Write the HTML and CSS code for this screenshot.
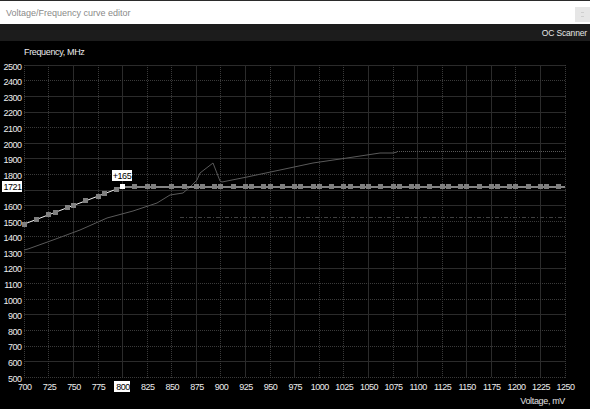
FILE: index.html
```html
<!DOCTYPE html>
<html>
<head>
<meta charset="utf-8">
<title>Voltage/Frequency curve editor</title>
<link rel="stylesheet" href="styles.css">
</head>
<body>
<div class="window">
  <header class="titlebar">
    <span class="title">Voltage/Frequency curve editor</span>
    <span class="close"></span>
  </header>
  <div class="toolbar"><span class="oc">OC Scanner</span></div>
  <main class="chart">
    <svg class="plot" width="590" height="368" viewBox="0 0 590 368">
      <g transform="translate(0,-41)">
        <text class="axis-title" x="24" y="55">Frequency, MHz</text>
        <g class="grid-solid">
          <line x1="73.5" y1="65" x2="73.5" y2="377"/>
          <line x1="122.5" y1="65" x2="122.5" y2="377"/>
          <line x1="196.5" y1="65" x2="196.5" y2="377"/>
          <line x1="245.5" y1="65" x2="245.5" y2="377"/>
          <line x1="294.5" y1="65" x2="294.5" y2="377"/>
          <line x1="368.5" y1="65" x2="368.5" y2="377"/>
          <line x1="417.5" y1="65" x2="417.5" y2="377"/>
          <line x1="466.5" y1="65" x2="466.5" y2="377"/>
          <line x1="491.5" y1="65" x2="491.5" y2="377"/>
          <line x1="540.5" y1="65" x2="540.5" y2="377"/>
          <line x1="24" y1="65.5" x2="566" y2="65.5"/>
          <line x1="24" y1="96.5" x2="566" y2="96.5"/>
          <line x1="24" y1="112.5" x2="566" y2="112.5"/>
          <line x1="24" y1="143.5" x2="566" y2="143.5"/>
          <line x1="24" y1="158.5" x2="566" y2="158.5"/>
          <line x1="24" y1="190.5" x2="566" y2="190.5"/>
          <line x1="24" y1="205.5" x2="566" y2="205.5"/>
          <line x1="24" y1="252.5" x2="566" y2="252.5"/>
          <line x1="24" y1="268.5" x2="566" y2="268.5"/>
          <line x1="24" y1="314.5" x2="566" y2="314.5"/>
          <line x1="24" y1="361.5" x2="566" y2="361.5"/>
        </g>
        <g class="grid-dot">
          <line x1="24.5" y1="65" x2="24.5" y2="378"/>
          <line x1="48.5" y1="65" x2="48.5" y2="378"/>
          <line x1="98.5" y1="65" x2="98.5" y2="378"/>
          <line x1="147.5" y1="65" x2="147.5" y2="378"/>
          <line x1="171.5" y1="65" x2="171.5" y2="378"/>
          <line x1="220.5" y1="65" x2="220.5" y2="378"/>
          <line x1="270.5" y1="65" x2="270.5" y2="378"/>
          <line x1="319.5" y1="65" x2="319.5" y2="378"/>
          <line x1="343.5" y1="65" x2="343.5" y2="378"/>
          <line x1="393.5" y1="65" x2="393.5" y2="378"/>
          <line x1="442.5" y1="65" x2="442.5" y2="378"/>
          <line x1="515.5" y1="65" x2="515.5" y2="378"/>
          <line x1="565.5" y1="65" x2="565.5" y2="378"/>
          <line x1="24" y1="80.5" x2="566" y2="80.5"/>
          <line x1="24" y1="127.5" x2="566" y2="127.5"/>
          <line x1="24" y1="174.5" x2="566" y2="174.5"/>
          <line x1="24" y1="221.5" x2="566" y2="221.5"/>
          <line x1="24" y1="236.5" x2="566" y2="236.5"/>
          <line x1="24" y1="283.5" x2="566" y2="283.5"/>
          <line x1="24" y1="299.5" x2="566" y2="299.5"/>
          <line x1="24" y1="330.5" x2="566" y2="330.5"/>
          <line x1="24" y1="346.5" x2="566" y2="346.5"/>
          <line x1="24" y1="377.5" x2="566" y2="377.5"/>
        </g>
        <line class="marker" x1="180" y1="217.5" x2="566" y2="217.5"/>

        <polyline class="default-curve" points="24,250 28,249 53,240 80,230 107,218 133,211 157,203 170,195 183,193 190,187 197,180 200,173 213,163 220,181 222,182 247,177 280,170 313,163 347,158 380,153 393,153 397,152"/>
        <line class="default-flat" x1="397" y1="151.5" x2="565" y2="151.5"/>

        <polyline class="edit-rise" points="24.3,224 36.6,219.4 48.9,214.7 55,212.4 67.3,207.7 73.5,205.4 85.8,200.8 98.1,196.1 104.2,193.8 116.5,189.1 122.6,186.8"/>
        <line class="edit-flat" x1="122.6" y1="187" x2="565" y2="187"/>

        <g class="pt">
          <rect x="21.8" y="221.5" width="5" height="5"/>
          <rect x="34.1" y="216.9" width="5" height="5"/>
          <rect x="46.4" y="212.2" width="5" height="5"/>
          <rect x="52.5" y="209.9" width="5" height="5"/>
          <rect x="64.8" y="205.2" width="5" height="5"/>
          <rect x="71" y="202.9" width="5" height="5"/>
          <rect x="83.3" y="198.3" width="5" height="5"/>
          <rect x="95.6" y="193.6" width="5" height="5"/>
          <rect x="101.7" y="191.3" width="5" height="5"/>
          <rect x="114" y="186.6" width="5" height="5"/>

          <rect x="132.4" y="184" width="5" height="5"/>
          <rect x="144.7" y="184" width="5" height="5"/>
          <rect x="150.8" y="184" width="5" height="5"/>
          <rect x="169.3" y="184" width="5" height="5"/>
          <rect x="181.6" y="184" width="5" height="5"/>
          <rect x="193.9" y="184" width="5" height="5"/>
          <rect x="200" y="184" width="5" height="5"/>
          <rect x="212.3" y="184" width="5" height="5"/>
          <rect x="218.4" y="184" width="5" height="5"/>
          <rect x="230.7" y="184" width="5" height="5"/>
          <rect x="243" y="184" width="5" height="5"/>
          <rect x="249.1" y="184" width="5" height="5"/>
          <rect x="261.4" y="184" width="5" height="5"/>
          <rect x="267.6" y="184" width="5" height="5"/>
          <rect x="279.9" y="184" width="5" height="5"/>
          <rect x="292.2" y="184" width="5" height="5"/>
          <rect x="298.3" y="184" width="5" height="5"/>
          <rect x="310.6" y="184" width="5" height="5"/>
          <rect x="316.8" y="184" width="5" height="5"/>
          <rect x="329.1" y="184" width="5" height="5"/>
          <rect x="341.4" y="184" width="5" height="5"/>
          <rect x="347.5" y="184" width="5" height="5"/>
          <rect x="359.8" y="184" width="5" height="5"/>
          <rect x="365.9" y="184" width="5" height="5"/>
          <rect x="378.2" y="184" width="5" height="5"/>
          <rect x="390.5" y="184" width="5" height="5"/>
          <rect x="396.6" y="184" width="5" height="5"/>
          <rect x="408.9" y="184" width="5" height="5"/>
          <rect x="415.1" y="184" width="5" height="5"/>
          <rect x="427.4" y="184" width="5" height="5"/>
          <rect x="439.7" y="184" width="5" height="5"/>
          <rect x="445.8" y="184" width="5" height="5"/>
          <rect x="458.1" y="184" width="5" height="5"/>
          <rect x="464.3" y="184" width="5" height="5"/>
          <rect x="476.6" y="184" width="5" height="5"/>
          <rect x="488.9" y="184" width="5" height="5"/>
          <rect x="495" y="184" width="5" height="5"/>
          <rect x="507.3" y="184" width="5" height="5"/>
          <rect x="513.4" y="184" width="5" height="5"/>
          <rect x="525.7" y="184" width="5" height="5"/>
          <rect x="538" y="184" width="5" height="5"/>
          <rect x="544.1" y="184" width="5" height="5"/>
          <rect x="556.4" y="184" width="5" height="5"/>
        </g>
        <rect class="pt-active" x="120" y="184" width="5" height="5"/>

        <rect class="tag" x="112" y="170" width="20" height="11"/>
        <text class="tag-text" x="122" y="179">+165</text>

        <g class="ylab">
          <text x="21.5" y="69.5">2500</text>
          <text x="21.5" y="85">2400</text>
          <text x="21.5" y="100.5">2300</text>
          <text x="21.5" y="116">2200</text>
          <text x="21.5" y="131.5">2100</text>
          <text x="21.5" y="147.5">2000</text>
          <text x="21.5" y="163">1900</text>
          <text x="21.5" y="178.5">1800</text>
          <text x="21.5" y="210">1600</text>
          <text x="21.5" y="225.5">1500</text>
          <text x="21.5" y="241">1400</text>
          <text x="21.5" y="256.5">1300</text>
          <text x="21.5" y="272">1200</text>
          <text x="21.5" y="288">1100</text>
          <text x="21.5" y="303.5">1000</text>
          <text x="21.5" y="319">900</text>
          <text x="21.5" y="334.5">800</text>
          <text x="21.5" y="350">700</text>
          <text x="21.5" y="366">600</text>
          <text x="21.5" y="381.5">500</text>
        </g>
        <rect class="tag" x="2" y="181" width="20" height="11"/>
        <text class="ylab-active" x="21.5" y="190">1721</text>

        <g class="xlab">
          <text x="24.8" y="390">700</text>
          <text x="49.4" y="390">725</text>
          <text x="74" y="390">750</text>
          <text x="98.5" y="390">775</text>
          <text x="147.7" y="390">825</text>
          <text x="172.3" y="390">850</text>
          <text x="196.9" y="390">875</text>
          <text x="221.4" y="390">900</text>
          <text x="246" y="390">925</text>
          <text x="270.6" y="390">950</text>
          <text x="295.2" y="390">975</text>
          <text x="319.8" y="390">1000</text>
          <text x="344.3" y="390">1025</text>
          <text x="368.9" y="390">1050</text>
          <text x="393.5" y="390">1075</text>
          <text x="418.1" y="390">1100</text>
          <text x="442.7" y="390">1125</text>
          <text x="467.2" y="390">1150</text>
          <text x="491.8" y="390">1175</text>
          <text x="516.4" y="390">1200</text>
          <text x="541" y="390">1225</text>
          <text x="565.6" y="390">1250</text>
        </g>
        <rect class="tag" x="114" y="381" width="16" height="11"/>
        <text class="xlab-active" x="123" y="390">800</text>

        <text class="axis-title-x" x="565" y="404">Voltage, mV</text>
      </g>
    </svg>
  </main>
</div>
</body>
</html>
```
FILE: styles.css
```css
html, body {
  margin: 0;
  padding: 0;
  background: #000;
}

body {
  width: 590px;
  height: 409px;
  overflow: hidden;
  font-family: "Liberation Sans", Arial, sans-serif;
}

.window {
  display: flex;
  flex-direction: column;
  width: 590px;
  height: 409px;
}

.titlebar {
  display: flex;
  align-items: center;
  height: 23px;
  border-top: 1px solid #2b2b2b;
  background: #fff;
  padding-left: 6px;
  box-sizing: content-box;
}

.title {
  font-size: 9px;
  color: #8a8a8a;
  line-height: 1;
  margin-top: 1px;
}

.close {
  margin-left: auto;
  width: 15px;
  height: 15px;
  background: #e6e6e6;
  display: flex;
  align-items: center;
  justify-content: center;
  margin-top: 3px;
}

.close::before {
  content: "";
  width: 3px;
  height: 3px;
  border-top: 1px solid #cfcfcf;
  border-bottom: 1px solid #cfcfcf;
}

.toolbar {
  display: flex;
  justify-content: flex-end;
  align-items: center;
  height: 17px;
  background: #1c1c1c;
  padding-right: 3px;
}

.oc {
  font-size: 8.5px;
  color: #e6e6e6;
  letter-spacing: -0.15px;
  margin-top: 1px;
}

.chart {
  flex: 1;
  background: #000;
}

.plot {
  display: block;
}

.plot text {
  font-family: "Liberation Sans", Arial, sans-serif;
}

.axis-title {
  font-size: 9px;
  fill: #ececec;
  letter-spacing: -0.35px;
}

.axis-title-x {
  font-size: 9px;
  fill: #e2e2e2;
  letter-spacing: -0.35px;
  text-anchor: end;
}

.grid-solid line {
  stroke: #2b2b2b;
  stroke-width: 1;
  shape-rendering: crispEdges;
}

.grid-dot line {
  stroke: #3a3a3a;
  stroke-width: 1;
  stroke-dasharray: 1 1;
  shape-rendering: crispEdges;
}

.marker {
  stroke: #404040;
  stroke-width: 1;
  stroke-dasharray: 4 2 1 2;
  shape-rendering: crispEdges;
}

.default-curve {
  fill: none;
  stroke: #5a5a5a;
  stroke-width: 1;
}

.default-flat {
  stroke: #5a5a5a;
  stroke-width: 1;
  stroke-dasharray: 1 1;
  shape-rendering: crispEdges;
}

.edit-rise {
  fill: none;
  stroke: #f2f2f2;
  stroke-width: 1;
}

.edit-flat {
  stroke: #b0b0b0;
  stroke-width: 1.5;
}

.pt rect {
  fill: #808080;
  shape-rendering: crispEdges;
}

.pt-active {
  fill: #ffffff;
  shape-rendering: crispEdges;
}

.tag {
  fill: #ffffff;
  shape-rendering: crispEdges;
}

.tag-text {
  font-size: 9px;
  fill: #000;
  text-anchor: middle;
  letter-spacing: -0.4px;
}

.ylab text {
  font-size: 9px;
  fill: #eeeeee;
  text-anchor: end;
  letter-spacing: -0.5px;
}

.ylab-active {
  font-size: 9px;
  fill: #000;
  text-anchor: end;
  letter-spacing: -0.5px;
}

.xlab text {
  font-size: 9px;
  fill: #eeeeee;
  text-anchor: middle;
  letter-spacing: -0.5px;
}

.xlab-active {
  font-size: 9px;
  fill: #000;
  text-anchor: middle;
  letter-spacing: -0.5px;
}
```
